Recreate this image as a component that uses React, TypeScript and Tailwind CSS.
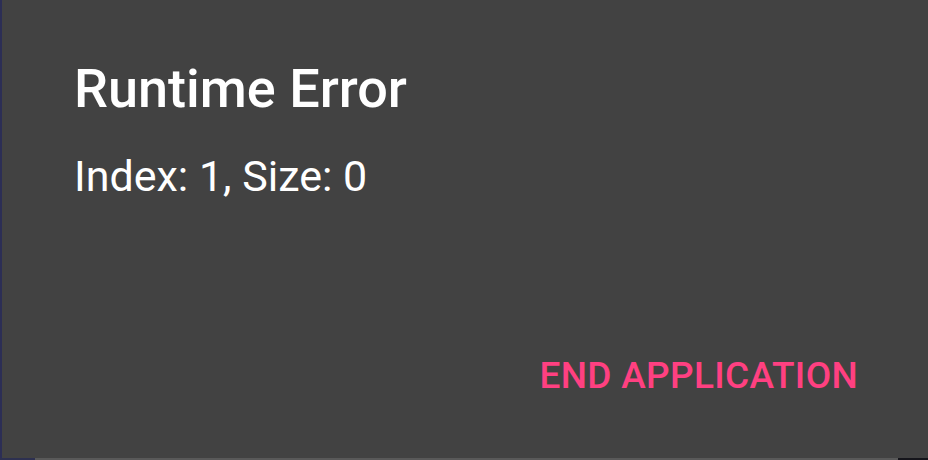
export default function App() {
  return (
    <div className="w-[928px] h-[460px] bg-[#424242] flex flex-col overflow-hidden" style={{ fontFamily: 'Roboto, "Noto Sans", sans-serif' }}>
      <div className="flex flex-1 min-h-0">
        <div className="w-[2px] bg-[#2c2e55]" />
        <div className="flex-1 flex flex-col pl-[72px] pr-[70px] pt-[57px] pb-[62px]">
          <h1 className="text-[54px] leading-[64px] font-medium text-white">Runtime Error</h1>
          <p className="mt-[31px] text-[43px] leading-[48px] text-white">Index: 1, Size: 0</p>
          <div className="mt-auto flex justify-end">
            <button className="text-[37px] leading-[40px] font-medium text-[#ff4081] uppercase tracking-[0.3px]">End Application</button>
          </div>
        </div>
      </div>
      <div className="h-[2px] flex">
        <div className="w-[35px] bg-[#2d3050]" />
        <div className="flex-1 bg-[#595959]" />
        <div className="w-[30px] bg-[#15151b]" />
      </div>
    </div>
  );
}
